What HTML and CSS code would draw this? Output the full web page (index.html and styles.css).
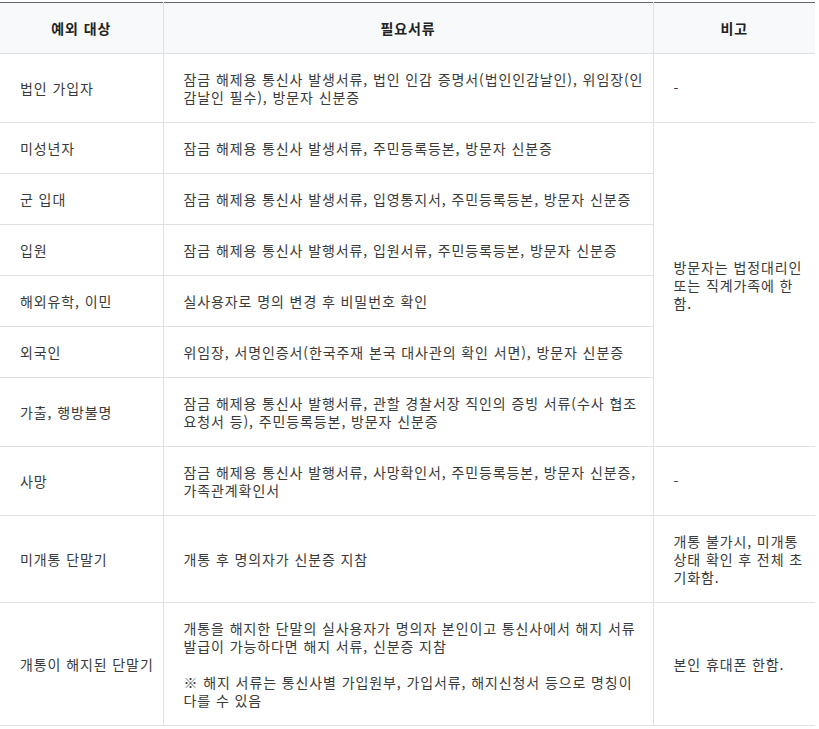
FILE: index.html
```html
<!DOCTYPE html>
<html lang="ko">
<head>
<meta charset="utf-8">
<link rel="stylesheet" href="styles.css">
</head>
<body>
<table class="doc-table">
  <colgroup>
    <col class="c1">
    <col class="c2">
    <col class="c3">
  </colgroup>
  <thead>
    <tr>
      <th>예외 대상</th>
      <th>필요서류</th>
      <th>비고</th>
    </tr>
  </thead>
  <tbody>
    <tr>
      <td class="target">법인 가입자</td>
      <td class="docs">잠금 해제용 통신사 발생서류, 법인 인감 증명서(법인인감날인), 위임장(인감날인 필수), 방문자 신분증</td>
      <td class="note">-</td>
    </tr>
    <tr>
      <td class="target">미성년자</td>
      <td class="docs">잠금 해제용 통신사 발생서류, 주민등록등본, 방문자 신분증</td>
      <td class="note" rowspan="6">방문자는 법정대리인 또는 직계가족에 한함.</td>
    </tr>
    <tr>
      <td class="target">군 입대</td>
      <td class="docs">잠금 해제용 통신사 발생서류, 입영통지서, 주민등록등본, 방문자 신분증</td>
    </tr>
    <tr>
      <td class="target">입원</td>
      <td class="docs">잠금 해제용 통신사 발행서류, 입원서류, 주민등록등본, 방문자 신분증</td>
    </tr>
    <tr>
      <td class="target">해외유학, 이민</td>
      <td class="docs">실사용자로 명의 변경 후 비밀번호 확인</td>
    </tr>
    <tr>
      <td class="target">외국인</td>
      <td class="docs">위임장, 서명인증서(한국주재 본국 대사관의 확인 서면), 방문자 신분증</td>
    </tr>
    <tr>
      <td class="target">가출, 행방불명</td>
      <td class="docs">잠금 해제용 통신사 발행서류, 관할 경찰서장 직인의 증빙 서류(수사 협조 요청서 등), 주민등록등본, 방문자 신분증</td>
    </tr>
    <tr>
      <td class="target">사망</td>
      <td class="docs">잠금 해제용 통신사 발행서류, 사망확인서, 주민등록등본, 방문자 신분증, 가족관계확인서</td>
      <td class="note">-</td>
    </tr>
    <tr>
      <td class="target">미개통 단말기</td>
      <td class="docs">개통 후 명의자가 신분증 지참</td>
      <td class="note">개통 불가시, 미개통 상태 확인 후 전체 초기화함.</td>
    </tr>
    <tr>
      <td class="target">개통이 해지된 단말기</td>
      <td class="docs">개통을 해지한 단말의 실사용자가 명의자 본인이고 통신사에서 해지 서류 발급이 가능하다면 해지 서류, 신분증 지참<br><br>※ 해지 서류는 통신사별 가입원부, 가입서류, 해지신청서 등으로 명칭이 다를 수 있음</td>
      <td class="note">본인 휴대폰 한함.</td>
    </tr>
  </tbody>
</table>
</body>
</html>
```

FILE: styles.css
```css
html, body {
  margin: 0;
  padding: 0;
  background: #ffffff;
}

body {
  padding-top: 2px;
  font-family: "Noto Sans CJK KR", "Noto Sans", sans-serif;
  font-size: 14px;
  line-height: 18px;
  letter-spacing: 0.9px;
  color: #3a3a3a;
}

.doc-table {
  width: 815px;
  border-collapse: collapse;
  table-layout: fixed;
  border-top: 1px solid #666666;
}

.c1 { width: 163px; }
.c2 { width: 490px; }
.c3 { width: 162px; }

.doc-table th {
  background: #f8f9fa;
  color: #222222;
  font-weight: 700;
  text-align: center;
  padding: 16px 10px;
  border: 1px solid #e0e0e0;
  border-top: none;
}

.doc-table td {
  text-align: left;
  vertical-align: middle;
  padding: 16px 10px 16px 20px;
  border: 1px solid #e0e0e0;
}

.doc-table td.target {
  padding-right: 2px;
}

.doc-table td.docs {
  padding-right: 3px;
}

.doc-table td.note {
  padding-right: 9px;
}

.doc-table th:first-child,
.doc-table tr > td:first-child {
  border-left: none;
}

.doc-table th:last-child,
.doc-table td:last-child {
  border-right: none;
}
```
